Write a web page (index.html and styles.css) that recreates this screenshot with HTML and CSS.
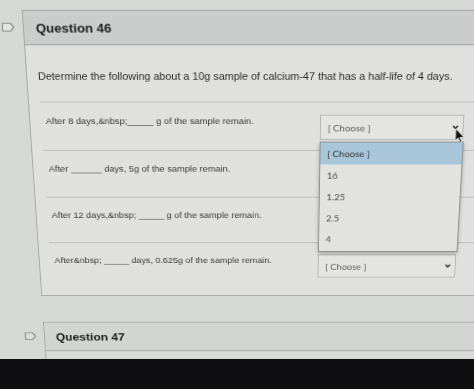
FILE: index.html
```html
<!DOCTYPE html>
<html lang="en">
<head>
<meta charset="utf-8">
<title>Question 46</title>
<link rel="stylesheet" href="styles.css">
</head>
<body>
<div class="screen">
  <div class="page">
    <section class="question">
      <div class="flag">
        <svg width="14" height="11" viewBox="0 0 14 11"><path d="M1.5 1.5 H9.5 L12.8 5.5 L9.5 9.5 H1.5 Z" fill="#e4e5e3" stroke="#8c8e8d" stroke-width="1.2" stroke-linejoin="round"/></svg>
      </div>
      <div class="card">
        <header class="card-head"><h2>Question 46</h2></header>
        <div class="card-body">
          <p class="prompt">Determine the following about a 10g sample of calcium-47 that has a half-life of 4 days.</p>
          <div class="rows">
            <div class="row">
              <span class="label">After 8 days,&amp;nbsp;_____ g of the sample remain.</span>
              <div class="select-wrap">
                <div class="select">[ Choose ]<svg class="chev" width="7" height="5" viewBox="0 0 7 5"><path d="M1 1 L3.5 3.6 L6 1" fill="none" stroke="#2a2a2a" stroke-width="1.6"/></svg></div>
                <ul class="options">
                  <li class="active">[ Choose ]</li>
                  <li>16</li>
                  <li>1.25</li>
                  <li>2.5</li>
                  <li>4</li>
                </ul>
                <svg class="cursor" width="11" height="17" viewBox="0 0 11 17"><path d="M1 1 L1 14 L4 11 L6.2 16 L8 15.2 L5.8 10.4 L10 10.4 Z" fill="#111" stroke="#f2f2f2" stroke-width="0.8" stroke-linejoin="round"/></svg>
              </div>
            </div>
            <div class="row">
              <span class="label">After ______ days, 5g of the sample remain.</span>
            </div>
            <div class="row">
              <span class="label">After 12 days,&amp;nbsp; _____ g of the sample remain.</span>
            </div>
            <div class="row">
              <span class="label">After&amp;nbsp; _____ days, 0.625g of the sample remain.</span>
              <div class="select-wrap">
                <div class="select">[ Choose ]<svg class="chev" width="7" height="5" viewBox="0 0 7 5"><path d="M1 1 L3.5 3.6 L6 1" fill="none" stroke="#2a2a2a" stroke-width="1.6"/></svg></div>
              </div>
            </div>
          </div>
        </div>
      </div>
    </section>
    <section class="question q47">
      <div class="flag">
        <svg width="14" height="11" viewBox="0 0 14 11"><path d="M1.5 1.5 H9.5 L12.8 5.5 L9.5 9.5 H1.5 Z" fill="#dcdedb" stroke="#8c8e8d" stroke-width="1.2" stroke-linejoin="round"/></svg>
      </div>
      <div class="card">
        <header class="card-head"><h2>Question 47</h2></header>
        <div class="card-body short"></div>
      </div>
    </section>
  </div>
</div>
<div class="bezel"></div>
</body>
</html>
```

FILE: styles.css
```css
* { box-sizing: border-box; }
html, body { margin: 0; padding: 0; }
body {
  width: 474px;
  height: 389px;
  overflow: hidden;
  background: #0f0e10;
  font-family: "Liberation Sans", Arial, sans-serif;
  color: #333;
}
.screen {
  height: 359px;
  overflow: hidden;
  background: #d6d8d5;
}
.page {
  width: 540px;
  padding-top: 10px;
  transform-origin: 265px 0;
  transform: perspective(312px) rotateX(-5deg);
}
.question {
  display: flex;
}
.flag {
  width: 21px;
  flex: none;
  padding-top: 12px;
}
.flag svg { display: block; margin-left: -1px; }
.card {
  flex: 1;
  border: 1px solid #a7a9a7;
  background: #e0e1de;
}
.card-head {
  height: 35px;
  background: #cbcdcc;
  border-bottom: 1px solid #a2a4a3;
  display: flex;
  align-items: center;
  padding-left: 12px;
}
.card-head h2 {
  margin: 0;
  font-size: 13.3px;
  font-weight: bold;
  color: #1e1e1e;
}
.card-body {
  padding: 0 12px 10px 11px;
}
.prompt {
  margin: 0;
  padding: 25px 0 20px;
  font-size: 11px;
  line-height: 14px;
  color: #2a2a2a;
}
.row {
  height: 52px;
  border-top: 1px solid #b9bbb8;
  display: grid;
  grid-template-columns: 284px 149px;
  align-items: start;
  padding: 13px 0 0 5px;
}
.label {
  font-size: 9.7px;
  line-height: 14px;
  color: #383838;
  white-space: nowrap;
}
.select-wrap {
  position: relative;
}
.select {
  height: 27px;
  border: 1px solid #b4b6b4;
  background: #e4e5e3;
  font-family: Lato, "Liberation Sans", sans-serif;
  font-size: 10px;
  color: #5a5a5a;
  display: flex;
  align-items: center;
  justify-content: space-between;
  padding: 0 4px 0 7px;
}
.chev { display: block; }
.options {
  position: absolute;
  top: 29px;
  left: 0;
  width: 150px;
  margin: 0;
  padding: 0 0 2px;
  list-style: none;
  background: #e2e3e1;
  border: 1px solid #8f9190;
  box-shadow: 0 2px 4px rgba(0, 0, 0, 0.28);
  font-family: Lato, "Liberation Sans", sans-serif;
  font-size: 10px;
  color: #4a4a4a;
  z-index: 2;
}
.options li {
  height: 24px;
  line-height: 24px;
  padding-left: 7px;
}
.options li.active {
  background: #a8c5d9;
  color: #333;
}
.cursor {
  position: absolute;
  left: 140px;
  top: 14px;
  z-index: 3;
}
.q47 {
  margin-top: 31px;
}
.q47 .card-head {
  background: #d3d5d2;
}
.card-body.short {
  height: 30px;
  background: #d8dad7;
}
.bezel {
  height: 30px;
  background: #0f0e10;
}
```
